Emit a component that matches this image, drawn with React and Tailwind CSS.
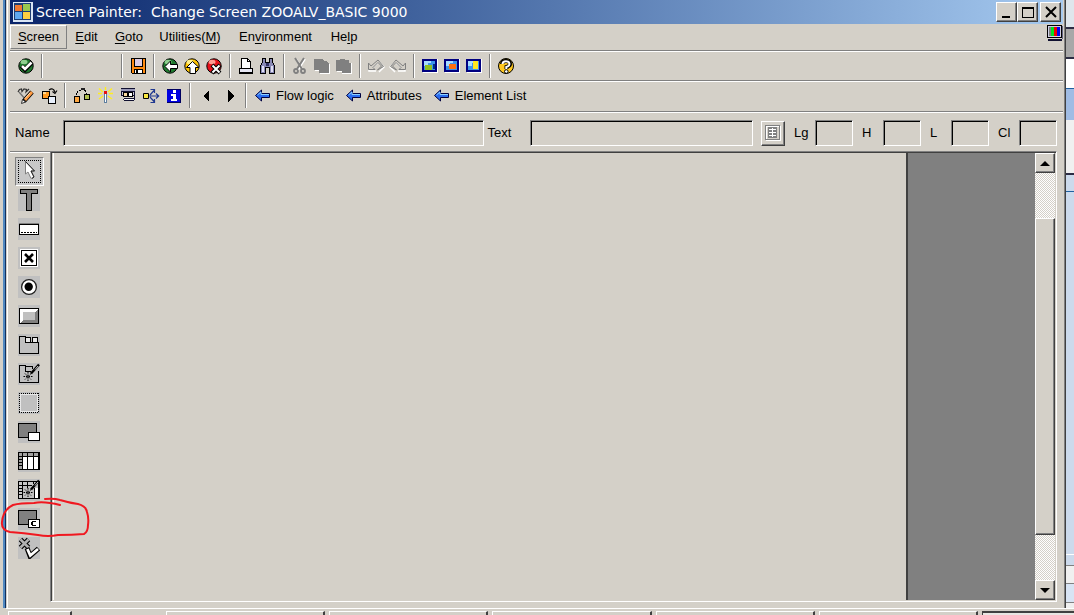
const P = ({ d, f = "none", s, w = 1 }) => <path d={d} fill={f} stroke={s} strokeWidth={w} />;

function Icon({ children, size = 18, smooth = false }) {
  return (
    <svg
      width={size}
      height={size}
      viewBox={`0 0 ${size} ${size}`}
      shapeRendering={smooth ? "auto" : "crispEdges"}
      aria-hidden="true"
      className="block shrink-0"
    >
      {children}
    </svg>
  );
}

const Ball = ({ c, hi, children }) => (
  <Icon smooth>
    <circle cx="9" cy="9" r="7.2" fill={c} stroke="#000" />
    <ellipse cx="7" cy="5" rx="3.5" ry="2.2" fill={hi} />
    {children}
  </Icon>
);

const EnterIcon = () => (
  <Ball c="#1f7a2e" hi="#8fd08f">
    <P d="M4.5 9 L8 12.5 L15 5.5" s="#000" w={4.5} />
    <P d="M5 9 L8 12 L14.5 5.5" s="#fff" w={2.6} />
  </Ball>
);
const SaveIcon = () => (
  <Icon>
    <P d="M2.5 1.5H16.5V16.5H3.5L2.5 15.5Z" f="#ff8a10" s="#000" />
    <P d="M5.5 1.5H13.5V9.5H5.5Z" f="#dccce4" s="#000" />
    <P d="M5.5 12.5H13.5V16.5H5.5Z" f="#fff" s="#000" />
    <P d="M7 13H9V16H7Z" f="#000" />
  </Icon>
);
const BackIcon = () => (
  <Ball c="#1f7a2e" hi="#8fd08f">
    <P d="M4 9.5 L9.5 4 V7.5 H16.5 V11.5 H9.5 V15Z" f="#fff" s="#000" />
  </Ball>
);
const UpIcon = () => (
  <Ball c="#ffc400" hi="#fff08a">
    <P d="M9.5 4.5 L16 10.5 H12.5 V16.5 H7 V10.5 H3.5Z" f="#fff" s="#000" />
  </Ball>
);
const CancelIcon = () => (
  <Ball c="#e8101a" hi="#ff9a90">
    <P d="M7 8L15 16M15 8L7 16" s="#000" w={4} />
    <P d="M7.5 8.5L14.5 15.5M14.5 8.5L7.5 15.5" s="#fff" w={2} />
  </Ball>
);
const PrintIcon = () => (
  <Icon>
    <P d="M4.5 1.5H10.5L13.5 4.5V11.5H4.5Z" f="#fff" s="#000" />
    <P d="M10.5 1.5V4.5H13.5" s="#000" />
    <P d="M2.5 11.5H15.5V15.5H2.5Z" f="#e8e8f4" s="#000" />
    <P d="M2 15H16V17H2Z" f="#000" />
  </Icon>
);
const FindIcon = () => (
  <Icon>
    <P d="M3.5 1.5H6.5V5.5H10.5V1.5H13.5V5.5L15.5 8.5V16.5H10.5V10.5H6.5V16.5H1.5V8.5L3.5 5.5Z" f="#8888b4" s="#000" />
    <P d="M3 9H5V15H3ZM12 9H14V15H12Z" f="#e0e0f4" />
    <P d="M7 6H10V9H7Z" f="#303060" />
  </Icon>
);
const CutIcon = () => (
  <Icon smooth>
    <g transform="translate(1 1)">
      <P d="M4 1L11 12M13 1L6 12" s="#fff" w={1.8} />
    </g>
    <P d="M4 1L11 12M13 1L6 12" s="#808080" w={2} />
    <circle cx="5" cy="14" r="2" fill="none" stroke="#808080" strokeWidth="1.8" />
    <circle cx="12" cy="14" r="2" fill="none" stroke="#808080" strokeWidth="1.8" />
  </Icon>
);
const CopyIcon = () => (
  <Icon>
    <P d="M2 3H9L11 5H14L17 8V17H7V14H2Z" f="#fff" />
    <P d="M1 2H9L11 4H13L16 7V16H6V13H1Z" f="#808080" />
  </Icon>
);
const PasteIcon = () => (
  <Icon>
    <P d="M2 3H14V6H17V17H7V15H2Z" f="#fff" />
    <P d="M1 3H5V2H10V3H14V6H16V16H7V14H1Z" f="#808080" />
  </Icon>
);
const CurveIcon = ({ flip }) => (
  <Icon smooth>
    <g transform={flip ? "translate(18 0) scale(-1 1)" : undefined}>
      <P d="M2 7V14H9M5 11L12 5L17 10L12 15" s="#fff" w={1.5} />
      <P d="M1.5 6V12.5H8L6 10.5L11 5.5L14.5 9L10.5 13L16.5 9.5L11 3L4 9Z" f="#d4d0c8" s="#808080" />
    </g>
  </Icon>
);
const WindowIcon = ({ children }) => (
  <Icon>
    <P d="M2 2H17V16H2Z" f="#fff" />
    <P d="M1 2H16V15H1Z" f="#000080" />
    <P d="M3 4H14V13H3Z" f="#3c94ec" />
    <P d="M3 4H10V6H7V9H3Z" f="#a8dcff" />
    {children}
  </Icon>
);
const HelpIcon = () => (
  <Icon smooth>
    <circle cx="9" cy="9" r="7.5" fill="#ffc820" stroke="#000" />
    <P d="M5 7Q5 4 9 4Q13 4 13 7Q13 9 9.5 10V12" s="#000" w={4} />
    <P d="M5.5 7Q5.5 4.2 9 4.2Q12.5 4.2 12.5 7Q12.5 9 9.3 10V12" s="#fff" w={2} />
    <circle cx="9.3" cy="14.5" r="1.8" fill="#fff" stroke="#000" />
  </Icon>
);

const GlassesPencilIcon = () => (
  <Icon smooth>
    <P d="M1 5L2.5 2.5L4.5 2L5 4.5L7 2L9.5 2.5L9 5L12 2" s="#303030" w={1.2} />
    <P d="M2 5L9 13" s="#707070" w={1.4} />
    <P d="M15 5L7 14" s="#000" w={4.6} />
    <P d="M15 5L8 13" s="#ff9a40" w={2.8} />
    <P d="M13 6L8 11.5" s="#ffe0b8" />
    <P d="M4.5 16.5L5.5 12.5L8.5 15Z" f="#fff" s="#303030" />
  </Icon>
);
const SwapIcon = () => (
  <Icon>
    <P d="M2.5 4.5H9.5V11.5H2.5Z" f="#ff9a20" s="#000" />
    <P d="M3 5H6V7H3Z" f="#ffd890" />
    <P d="M8.5 9.5H15.5V16.5H8.5Z" f="#e8f0fc" s="#000" />
    <g shapeRendering="auto"><P d="M9 3Q13 0 15 5M12.5 4.5L15 6.5L17 3.5" s="#000" w={1.1} /></g>
  </Icon>
);
const WhereUsedIcon = () => (
  <Icon>
    <P d="M1.5 9.5H6.5V15.5H1.5Z" f="#ffa840" s="#000" />
    <P d="M11.5 7.5H16.5V12.5H11.5Z" f="#b0c050" s="#000" />
    <path d="M3.5 8V6L5.5 3.5H7L9 2.5H11L13.5 5V7" fill="none" stroke="#000" strokeDasharray="2 1" />
    <P d="M8 1H12V3H8Z" f="#202020" />
  </Icon>
);
const MatchIcon = () => (
  <Icon>
    <path d="M9.5 0V3M3 1.5L7 5M16 1.5L12 5M3 12L7 9M16 12L12 9M2 6.5H6M13 6.5H17" fill="none" stroke="#ffee20" strokeWidth="1.4" shapeRendering="auto" />
    <P d="M8 7H11V16H8Z" f="#6080a0" />
    <P d="M9 7H10V15H9Z" f="#fff" />
    <P d="M8 4H11V7H8Z" f="#e81010" />
  </Icon>
);
const ClampIcon = () => (
  <Icon>
    <P d="M2.5 1.5H15.5V8.5H2.5Z" f="#c8c8d8" s="#101030" />
    <P d="M2 2H16V4H2Z" f="#9898b8" />
    <P d="M2 4H16V5H2Z" f="#101030" />
    <P d="M4.5 5.5H8.5V9.5H4.5Z" f="#f8d8a0" s="#000" />
    <P d="M9.5 5.5H13.5V9.5H9.5Z" f="#fff" s="#000" />
    <P d="M5 11H16V12H5ZM4 12H5V13H4ZM5 13H15V14H5ZM15 9H16V13H15Z" f="#101030" />
    <P d="M5 12H15V13H5Z" f="#fff" />
  </Icon>
);
const HierarchyIcon = () => (
  <Icon smooth>
    <P d="M7 9H16.5M8 8L12 3.5M8 10L12 14.5M8.5 2.5H12.5V6M8.5 15.5H12.5V12M14 6.5L16.7 9L14 11.5" s="#203890" w={1.2} />
    <P d="M1.5 6.5H6.5V11.5H1.5Z" f="#f8e840" s="#000" />
  </Icon>
);
const InfoIcon = () => (
  <Icon>
    <P d="M2 2H16V16H2Z" f="#0000e0" />
    <P d="M2 15H16V16H2ZM15 2H16V16H15ZM2 2H16V3H2Z" f="#000060" />
    <P d="M8 3H11V6H8ZM6 7H11V12H12V14H6V12H8V9H6Z" f="#fff" />
  </Icon>
);
const TriIcon = ({ left }) => (
  <Icon>
    <P d={left ? "M5 9L11 3V15Z" : "M13 9L7 3V15Z"} f="#000" />
  </Icon>
);
const ArrowIcon = () => (
  <Icon smooth>
    <P d="M1.5 8.5L7.5 3V6.5H15.5V10.5H7.5V14Z" f="#2a6cf0" s="#000040" />
    <P d="M3.5 8L7 5V7.5H15" s="#8cd0ff" />
  </Icon>
);

const Tile = ({ children, smooth }) => (
  <Icon size={22} smooth={smooth}>
    <P d="M0 0H22V22H0Z" f="#c0c0c0" />
    {children}
  </Icon>
);
const Wand = () => (
  <g shapeRendering="auto">
    <P d="M21 1.5L13 10.5" s="#000" w={2.4} />
    <P d="M20 3L17 6.5" s="#fff" w={0.8} />
    <path d="M10 9V18M5.5 13.5H14.5M7 10.5L13 16.5M13 10.5L7 16.5" stroke="#000" strokeDasharray="1.6 0.9" />
  </g>
);
const tools = [
  ["Select", <Icon size={22} smooth key="i">
    <P d="M7.5 1.5V14L10 12L13 18.5L16 17L13 11H16.5Z" f="#fff" s="#808080" />
    <P d="M7.5 1.5L16.5 11H13L16 17L14 18.5" s="#202020" />
  </Icon>],
  ["Text field", <Tile key="i"><P d="M2.5 .5H19.5V4.5H13.5V21.5H8.5V4.5H2.5Z" f="#808080" s="#000" /></Tile>],
  ["Input field", <Tile key="i">
    <P d="M1 5H21V17H1Z" f="#000" /><P d="M2 7H20V16H2Z" f="#fff" /><P d="M1 5H21V6H1Z" f="#808080" />
    <path d="M3 14.5H19" stroke="#000" strokeDasharray="2 1" />
  </Tile>],
  ["Checkbox", <Tile key="i">
    <P d="M2 2H20V20H2Z" f="#fff" /><P d="M3.5 3.5H18.5V18.5H3.5Z" f="#fff" s="#000" />
    <g shapeRendering="auto"><P d="M7 7L15 15M15 7L7 15" s="#000" w={2.6} /></g>
  </Tile>],
  ["Radio button", <Tile key="i" smooth>
    <circle cx="11" cy="11" r="7.4" fill="#fff" stroke="#202020" strokeWidth="1.3" />
    <circle cx="10.7" cy="10.7" r="4.2" fill="#000" />
  </Tile>],
  ["Pushbutton", <Tile key="i">
    <P d="M1.5 3.5H20.5V18.5H1.5Z" f="#c0c0c0" s="#000" />
    <P d="M2 4H20L17 7H5V15L2 18Z" f="#fff" /><P d="M20 4V18H2L5 15H17V7Z" f="#808080" />
  </Tile>],
  ["Tabstrip", <Tile key="i">
    <P d="M1.5 19.5V2.5H7.5V8.5H20.5V19.5Z" s="#000" />
    <P d="M7.5 3.5H12.5V8M14.5 8V3.5H19.5V8" s="#000" /><P d="M8 4H12V8H8ZM15 4H19V8H15Z" f="#e8e8e8" />
  </Tile>],
  ["Tabstrip wizard", <Tile key="i">
    <P d="M15 19.5H20.5V8M7 19.5H1.5V2.5H7.5V8.5H13" s="#000" />
    <P d="M7.5 3.5H14.5V6M1 19.5H20" s="#000" /><Wand />
  </Tile>],
  ["Box", <Tile key="i">
    <P d="M2.5 2.5H19.5V19.5H2.5Z" s="#e8e8e8" />
    <path d="M1 1.5H21M1 20.5H21M1.5 1V21M20.5 1V21" fill="none" stroke="#000" strokeDasharray="1 1" />
  </Tile>],
  ["Subscreen area", <Tile key="i">
    <P d="M.5 2.5H18.5V16.5H.5Z" f="#808080" s="#000" /><P d="M10.5 11.5H21.5V19.5H10.5Z" f="#fff" s="#000" />
  </Tile>],
  ["Table control", <Tile key="i">
    <P d="M1 2H21V19H1Z" f="#fff" /><P d="M1 2H21V6H1ZM1 2H4V19H1Z" f="#a0a0a0" />
    <P d="M.5 2.5H21.5V19.5H.5ZM0 6.5H21M4.5 2V19M9.5 2V19M15.5 2V19M20.5 2V19M1 9.5H4M1 12.5H4M1 15.5H4" s="#000" />
  </Tile>],
  ["Table control wizard", <Tile key="i">
    <P d="M1 2H4V19H1ZM1 2H21V6H1Z" f="#c8c8c8" /><P d="M17 9H20V19H17Z" f="#fff" />
    <P d="M.5 2.5H21.5V19.5H.5ZM0 6.5H14M4.5 2V19M9.5 2V9M15.5 2V5M20.5 2V19M1 9.5H4M1 12.5H4M1 15.5H4M16.5 9V19" s="#000" /><Wand />
  </Tile>],
  ["Custom control", <Tile key="i">
    <P d="M.5 2.5H18.5V16.5H.5Z" f="#808080" s="#000" /><P d="M10.5 11.5H21.5V19.5H10.5Z" f="#fff" s="#000" />
    <P d="M14 13H18V14H15V17H18V18H14V17H13V14H14Z" f="#000" />
  </Tile>],
  ["Status icon", <Tile key="i" smooth>
    <P d="M2.5 2.5L10.5 10.5M10.5 2.5L2.5 10.5" s="#000" w={4.8} /><P d="M2.5 2.5L10.5 10.5M10.5 2.5L2.5 10.5" s="#b0b0b0" w={2.6} />
    <P d="M9 11L12 19L20.5 11.5" s="#000" w={5} /><P d="M9.4 12L12.3 18.5L20 12" s="#fff" w={2.8} />
  </Tile>],
];

const Sep = () => <span className="mx-1 w-[2px] shrink-0 self-stretch border-l border-r border-l-[#808080] border-r-white" />;
const Tool = ({ label, children, className = "w-[22px]" }) => (
  <button aria-label={label} className={`flex shrink-0 items-center justify-center ${className}`}>
    {children}
  </button>
);
const Rule = () => <div className="h-[2px] shrink-0 border-b border-t border-b-white border-t-[#808080]" />;
const raised = "border border-b-[#404040] border-l-white border-r-[#404040] border-t-white bg-[#d4d0c8] shadow-[inset_-1px_-1px_0_#808080]";
const sunken = "h-[26px] min-w-0 border-b border-l border-r border-t border-b-white border-l-[#808080] border-r-white border-t-[#808080] bg-[#d4d0c8] px-1 shadow-[inset_1px_1px_0_#000] outline-none";

function WindowButton({ label, children }) {
  return (
    <button aria-label={label} className={`flex h-5 w-[21px] items-center justify-center ${raised}`}>
      <svg width="14" height="14" viewBox="0 0 14 14" shapeRendering="crispEdges" aria-hidden="true">{children}</svg>
    </button>
  );
}

const menus = [
  ["", "S", "creen"],
  ["", "E", "dit"],
  ["", "G", "oto"],
  ["Utilities(", "M", ")"],
  ["En", "v", "ironment"],
  ["He", "l", "p"],
];
const menuWidths = ["w-[57px]", "w-[39px]", "w-[46px]", "w-[76px]", "w-[95px]", "w-[42px]"];

function SmallField({ id, label }) {
  return (
    <>
      <label htmlFor={id} className="w-[30px] shrink-0 pl-[9px]">{label}</label>
      <input id={id} className={`w-[38px] shrink-0 ${sunken}`} />
    </>
  );
}

function TitleBar() {
  return (
    <header className="flex h-6 shrink-0 items-center bg-linear-to-r from-[#0a246a] to-[#a6caf0] pl-[3px] pr-[2px]">
      <svg width="20" height="20" viewBox="0 0 20 20" shapeRendering="crispEdges" aria-hidden="true">
        <P d="M0 0H20V20H0Z" f="#d8e4f4" /><P d="M1 1H18V18H1Z" f="#1c3c74" />
        <P d="M2 3H9V9H2Z" f="#f07830" /><P d="M10 2H17V9H10Z" f="#98c850" />
        <P d="M2 10H9V17H2Z" f="#60a8f0" /><P d="M10 10H17V17H10Z" f="#ffd040" />
      </svg>
      <h1 className="ml-[3px] flex-1 whitespace-pre font-['DejaVu_Sans',sans-serif] text-[14px] leading-6 text-white">
        {"Screen Painter:  Change Screen ZOOALV_BASIC 9000"}
      </h1>
      <WindowButton label="Minimize"><P d="M2 11H10V13H2Z" f="#000" /></WindowButton>
      <WindowButton label="Maximize"><P d="M1.5 2.5H12.5V12.5H1.5Z" s="#000" /><P d="M1 2H13V4H1Z" f="#000" /></WindowButton>
      <span className="w-[2px]" />
      <WindowButton label="Close">
        <g shapeRendering="auto"><P d="M2 2L12 12M12 2L2 12" s="#000" w={2} /></g>
      </WindowButton>
    </header>
  );
}

function MenuBar() {
  return (
    <nav className="flex h-[26px] shrink-0 items-center">
      {menus.map(([a, u, b], i) => (
        <button
          key={a + u + b}
          className={`h-6 shrink-0 whitespace-nowrap text-center ${menuWidths[i]} ${i === 0 ? "border border-b-[#808080] border-l-white border-r-[#808080] border-t-white" : ""}`}
        >
          {a}<span className="underline underline-offset-2">{u}</span>{b}
        </button>
      ))}
      <button aria-label="Layout" className="ml-auto self-start pt-px">
        <svg width="16" height="16" viewBox="0 0 16 16" shapeRendering="crispEdges" aria-hidden="true">
          <P d="M.5 .5H14.5V12.5H.5Z" f="#d0d0e8" s="#000" />
          <P d="M2 2H4V11H2Z" f="#808080" /><P d="M4 2H7V11H4Z" f="#00e020" />
          <P d="M7 2H10V11H7Z" f="#f00000" /><P d="M10 2H13V11H10Z" f="#0000f0" />
          <P d="M1 14H15V16H1Z" f="#101030" /><P d="M15 1H16V14H15Z" f="#606080" />
        </svg>
      </button>
    </nav>
  );
}

function StandardToolbar() {
  return (
    <div className="flex h-7 shrink-0 py-[2px] pl-[5px]">
      <Tool label="Enter"><EnterIcon /></Tool>
      <Sep />
      <input aria-label="Command" className="-mx-1 w-[78px] bg-transparent px-2 outline-none" />
      <Sep />
      <Tool label="Save"><SaveIcon /></Tool>
      <Sep />
      <Tool label="Back"><BackIcon /></Tool>
      <Tool label="Exit"><UpIcon /></Tool>
      <Tool label="Cancel"><CancelIcon /></Tool>
      <Sep />
      <Tool label="Print"><PrintIcon /></Tool>
      <Tool label="Find"><FindIcon /></Tool>
      <Sep />
      <Tool label="Cut"><CutIcon /></Tool>
      <Tool label="Copy"><CopyIcon /></Tool>
      <Tool label="Paste"><PasteIcon /></Tool>
      <Sep />
      <Tool label="Undo"><CurveIcon /></Tool>
      <Tool label="Redo"><CurveIcon flip /></Tool>
      <Sep />
      <Tool label="New session"><WindowIcon><P d="M4 8H11V13H4Z" f="#90c020" /><P d="M12 7H14V12H12Z" f="#003080" /></WindowIcon></Tool>
      <Tool label="Window view"><WindowIcon><P d="M6 7H13V12H6Z" f="#ff7010" /></WindowIcon></Tool>
      <Tool label="Side view"><WindowIcon><P d="M8 4H13V12H8Z" f="#ffe820" /></WindowIcon></Tool>
      <Sep />
      <Tool label="Help"><HelpIcon /></Tool>
    </div>
  );
}

const slot = "w-[23px]";
function AppToolbar() {
  return (
    <div className="flex h-[29px] shrink-0 pb-[3px] pl-1 pt-px">
      <Tool label="Display or change" className={slot}><GlassesPencilIcon /></Tool>
      <Tool label="Other object" className={slot}><SwapIcon /></Tool>
      <Sep />
      <Tool label="Where used" className={slot}><WhereUsedIcon /></Tool>
      <Tool label="Activate" className={slot}><MatchIcon /></Tool>
      <Tool label="Test" className={slot}><ClampIcon /></Tool>
      <Tool label="Object list" className={slot}><HierarchyIcon /></Tool>
      <Tool label="Information" className={slot}><InfoIcon /></Tool>
      <Sep />
      <Tool label="Previous" className={slot}><TriIcon left /></Tool>
      <Tool label="Next" className={slot}><TriIcon /></Tool>
      <Sep />
      <div className="flex gap-[11px] pl-[3px]">
        {["Flow logic", "Attributes", "Element List"].map((t) => (
          <button key={t} className="flex items-center gap-1 whitespace-nowrap"><ArrowIcon />{t}</button>
        ))}
      </div>
    </div>
  );
}

function FieldBar() {
  return (
    <div className="flex h-[38px] shrink-0 items-center pl-[5px] pr-[7px] pt-[2px]">
      <label htmlFor="name" className="w-12 shrink-0">Name</label>
      <input id="name" className={`flex-[423] ${sunken}`} />
      <label htmlFor="text" className="w-[46px] shrink-0 pl-1">Text</label>
      <input id="text" className={`flex-[220] ${sunken}`} />
      <button aria-label="Field list" className={`ml-2 flex h-[25px] w-6 shrink-0 items-center justify-center ${raised}`}>
        <Icon size={16}>
          <P d="M1.5 1.5H15.5V15.5H1.5Z" s="#fff" /><P d="M.5 .5H14.5V14.5H.5Z" s="#808080" />
          <P d="M3 2H12V13H3Z" f="#808080" /><P d="M4 4.5H7M8 4.5H11M4 7.5H7M8 7.5H11M4 10.5H7M8 10.5H11M7.5 3V12" s="#fff" />
        </Icon>
      </button>
      <SmallField id="lg" label="Lg" />
      <SmallField id="h" label="H" />
      <SmallField id="l" label="L" />
      <SmallField id="cl" label="Cl" />
    </div>
  );
}

function ScrollBar() {
  return (
    <div className="flex w-5 shrink-0 flex-col bg-[repeating-conic-gradient(#fff_0_25%,#d4d0c8_0_50%)] bg-[length:2px_2px]">
      <button aria-label="Scroll up" className={`flex h-5 shrink-0 items-center justify-center ${raised}`}>
        <svg width="10" height="5" viewBox="0 0 10 5" aria-hidden="true"><P d="M0 5L5 0L10 5Z" f="#000" /></svg>
      </button>
      <div className="flex-[45]" />
      <div className={`flex-[317] ${raised}`} />
      <div className="flex-[45]" />
      <button aria-label="Scroll down" className={`flex h-5 shrink-0 items-center justify-center ${raised}`}>
        <svg width="10" height="5" viewBox="0 0 10 5" aria-hidden="true"><P d="M0 0H10L5 5Z" f="#000" /></svg>
      </button>
    </div>
  );
}

function Workspace() {
  return (
    <main className="flex min-h-0 flex-1">
      <div className="flex w-10 shrink-0 flex-col border-t border-[#808080] pl-[5px] pt-[5px] shadow-[inset_0_1px_0_#fff]">
        {tools.map(([label, icon], i) => (
          <button
            key={label}
            aria-label={label}
            className={`flex h-[29px] w-[29px] shrink-0 items-start justify-start ${i === 0 ? "border border-b-white border-l-[#808080] border-r-white border-t-[#808080] bg-[#c8c8c8] pl-[2px] pt-[2px] outline-1 -outline-offset-4 outline-dotted outline-black" : "pl-[3px] pt-[3px]"}`}
          >
            {icon}
          </button>
        ))}
      </div>
      <div className="mr-[7px] flex min-w-0 flex-1 border border-b-white border-l-[#808080] border-r-white border-t-[#808080]">
        <div className="flex min-w-0 flex-1 border-l border-t border-[#404040] pb-px pr-px">
          <div className="ml-px flex-[855] border-l border-white" />
          <div className="flex-[128] border-l-2 border-[#404040] bg-[#808080]" />
          <ScrollBar />
        </div>
      </div>
    </main>
  );
}

const backdrop = [
  "flex-[27] bg-[#dfe6ec]",
  "h-[2px] bg-[#2c2c44]",
  "flex-[28] bg-[#a8a8a8]",
  "h-[2px] bg-[#2c2c44]",
  "flex-[29] bg-white",
  "h-px bg-[#2060a0]",
  "flex-[31] bg-[#a0bce4]",
  "flex-[53] bg-[#f0f0f0]",
  "h-[2px] bg-[#2c2c44]",
  "flex-[16] bg-[#ccdaec]",
  "h-px bg-[#2060a0]",
  "flex-[361] bg-[#ccdaec]",
  "h-px bg-white",
  "flex-[10] bg-[#ccdaec]",
  "h-px bg-[#808080]",
  "flex-[17] bg-[#f0f0f0]",
  "h-px bg-[#808080]",
  "flex-[18] bg-[#d8e4f4]",
  "h-px bg-[#808080]",
  "flex-[5] bg-[#f0f0f0]",
];

const statusCell = "flex-[159] border-l border-r-2 border-t border-l-white border-r-[#404040] border-t-white";

export default function App() {
  return (
    <div className="relative flex h-screen min-h-[600px] flex-col overflow-hidden bg-[#d4d0c8] font-['Liberation_Sans',Arial,sans-serif] text-[13px] text-black">
      <div className="flex min-h-0 flex-1">
        <div className="flex w-[10px] shrink-0 pl-[3px]">
          <span className="w-[2px] bg-[#5088c0]" />
          <span className="w-px bg-[#103060]" />
          <span className="ml-px w-px bg-white" />
        </div>
        <div className="flex min-w-0 flex-1 flex-col">
          <div className="mr-px flex shrink-0 flex-col">
            <TitleBar />
            <MenuBar />
            <Rule />
            <StandardToolbar />
            <Rule />
            <AppToolbar />
            <Rule />
          </div>
          <FieldBar />
          <Workspace />
          <div className="h-[6px] shrink-0" />
        </div>
        <div className="w-[2px] shrink-0 border-l border-r border-l-[#808080] border-r-[#404040]" />
        <div className="flex w-2 shrink-0 flex-col">
          {backdrop.map((c, i) => <span key={i} className={c} />)}
        </div>
      </div>
      <footer className="ml-[6px] flex h-[7px] shrink-0 gap-1 border-t border-white pl-[2px] pt-[2px]">
        <span className="flex-[62] border-l border-r-2 border-t border-l-white border-r-[#404040] border-t-white" />
        <span className="flex-[88]" />
        <span className={statusCell} />
        <span className={statusCell} />
        <span className={statusCell} />
        <span className={statusCell} />
        <span className={statusCell} />
        <span className="flex-[93] border-l border-t-2 border-[#404040] bg-[#e8e6e2]" />
      </footer>
      <svg className="pointer-events-none absolute left-0 top-[495px]" width="92" height="45" viewBox="0 0 92 45" aria-hidden="true">
        <path d="M45 4Q54 3 60 5Q70 8 78 9Q86 11 87 17Q89 23 88 30Q88 37 84 39Q72 40 58 40Q48 42 38 40Q24 38 10 37Q1 35 2 27Q3 15 13 10Q20 8 34 8Q44 6 60 10" fill="none" stroke="#f01820" strokeWidth="2" strokeLinejoin="round" strokeLinecap="round" />
      </svg>
    </div>
  );
}
